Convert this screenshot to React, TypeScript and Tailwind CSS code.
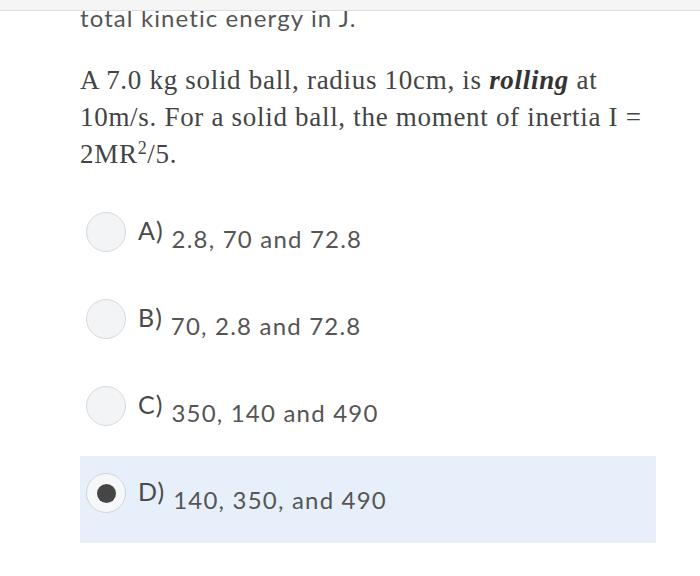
const OPTIONS = [
  { letter: "A)", text: "2.8, 70 and 72.8", selected: false },
  { letter: "B)", text: "70, 2.8 and 72.8", selected: false },
  { letter: "C)", text: "350, 140 and 490", selected: false },
  { letter: "D)", text: "140, 350, and 490", selected: true },
];

function Radio({ selected }: { selected: boolean }) {
  return (
    <div
      className={
        "flex h-10 w-10 shrink-0 items-center justify-center rounded-full border-[1.5px] " +
        (selected ? "border-[#d2d4d8] bg-[#f6f7f8]" : "border-[#d7dade] bg-[#f3f4f6]")
      }
    >
      {selected && <div className="h-[19px] w-[19px] rounded-full bg-[#454545]" />}
    </div>
  );
}

export default function App() {
  return (
    <div className="h-[576px] w-[700px] overflow-hidden bg-white">
      <div className="h-[11px] border-b border-[#dddddd] bg-[#f5f5f5]" />
      <div className="overflow-hidden pl-[80px] pr-[44px]">
        <p className="-mt-[5px] text-[24px] leading-[24px] tracking-[1.1px] text-[#555555] [font-family:Lato,sans-serif]">
          total kinetic energy in J.
        </p>
        <p className="mt-[32px] text-[27px] leading-[37px] tracking-[0.7px] text-[#444444] [font-family:'Liberation_Serif',serif]">
          A 7.0 kg solid ball, radius 10cm, is <b className="italic text-[#333333]">rolling</b> at 10m/s. For a
          solid ball, the moment of inertia I = 2MR<sup className="text-[18px]">2</sup>/5.
        </p>
        <div className="mt-[22px]">
          {OPTIONS.map((o) => (
            <div
              key={o.letter}
              className={
                "flex h-[87px] items-start pl-[6px] pt-[17px] " + (o.selected ? "bg-[#e7f0fa]" : "")
              }
            >
              <Radio selected={o.selected} />
              <div className="ml-[12px] mt-[3px] whitespace-nowrap text-[#4a4a4a] [font-family:Lato,sans-serif]">
                <span className="text-[25px] leading-[30px] tracking-[1px]">{o.letter}</span>
                <span className="ml-[8px] align-[-8px] text-[24px] leading-[30px] tracking-[1.2px] text-[#555555]">
                  {o.text}
                </span>
              </div>
            </div>
          ))}
        </div>
      </div>
    </div>
  );
}
